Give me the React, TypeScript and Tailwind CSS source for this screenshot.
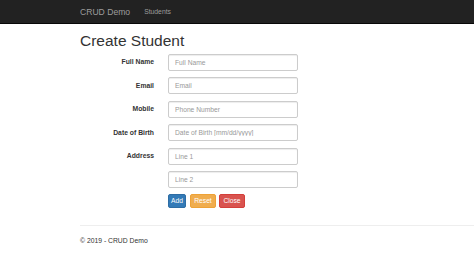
export default function App() {
  const fields = [
    { label: "Full Name", placeholder: "Full Name" },
    { label: "Email", placeholder: "Email" },
    { label: "Mobile", placeholder: "Phone Number" },
    { label: "Date of Birth", placeholder: "Date of Birth [mm/dd/yyyy]" },
    { label: "Address", placeholder: "Line 1" },
    { label: "", placeholder: "Line 2" },
  ];

  return (
    <div className="min-h-[274px] bg-white font-['Liberation_Sans',Arial,sans-serif] text-[#333]">
      {/* Navbar */}
      <nav className="flex h-[24px] items-center border-b border-[#080808] bg-[#222] pt-[1px] pl-[80px]">
        <span className="text-[8.6px] text-[#9d9d9d]">CRUD Demo</span>
        <span className="ml-[14px] text-[6.8px] text-[#9d9d9d]">Students</span>
      </nav>

      <div className="pl-[80px]">
        <h1 className="mt-[8px] text-[15.5px] leading-[18px] text-[#333]">Create Student</h1>

        {/* Form */}
        <div className="mt-[4px] flex flex-col gap-[6.4px]">
          {fields.map((f) => (
            <div key={f.placeholder} className="flex items-center">
              <label className="w-[74px] text-right text-[6.8px] font-bold text-[#333]">{f.label}</label>
              <input
                placeholder={f.placeholder}
                className="ml-[14px] h-[17px] w-[130px] rounded-[2px] border border-[#ccc] px-[6px] text-[6.7px] shadow-[inset_0_1px_1px_rgba(0,0,0,0.075)] outline-none placeholder:text-[#999]"
              />
            </div>
          ))}
        </div>

        <div className="mt-[6px] flex gap-[3px] pl-[88px]">
          <button className="h-[14px] w-[18px] rounded-[2px] border border-[#2e6da4] bg-[#337ab7] text-[6.7px] text-white">Add</button>
          <button className="ml-[1px] h-[14px] w-[26px] rounded-[2px] border border-[#eea236] bg-[#f0ad4e] text-[6.7px] text-white">Reset</button>
          <button className="h-[14px] w-[26px] rounded-[2px] border border-[#d43f3a] bg-[#d9534f] text-[6.7px] text-white">Close</button>
        </div>

        <hr className="mt-[17px] border-t border-[#eee]" />
        <footer className="mt-[10px] text-[6.8px] text-[#333]">© 2019 - CRUD Demo</footer>
      </div>
    </div>
  );
}
